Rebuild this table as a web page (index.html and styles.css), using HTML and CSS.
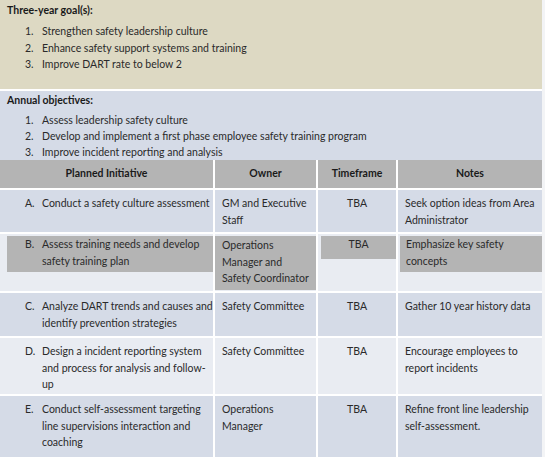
FILE: index.html
```html
<!DOCTYPE html>
<html lang="en">
<head>
    <meta charset="UTF-8">
    <meta name="viewport" content="width=device-width, initial-scale=1.0">
    <title>Safety Plan</title>
    <link rel="stylesheet" href="styles.css">
</head>
<body>
    <div class="page">
        <div class="goals">
            <h2>Three-year goal(s):</h2>
            <ol>
                <li><span class="num">1.</span><span>Strengthen safety leadership culture</span></li>
                <li><span class="num">2.</span><span>Enhance safety support systems and training</span></li>
                <li><span class="num">3.</span><span>Improve DART rate to below 2</span></li>
            </ol>
        </div>

        <div class="objectives">
            <h2>Annual objectives:</h2>
            <ol>
                <li><span class="num">1.</span><span>Assess leadership safety culture</span></li>
                <li><span class="num">2.</span><span>Develop and implement a first phase employee safety training program</span></li>
                <li><span class="num">3.</span><span>Improve incident reporting and analysis</span></li>
            </ol>
        </div>

        <div class="plan">
            <div class="row head">
                <div class="cell">Planned Initiative</div>
                <div class="cell">Owner</div>
                <div class="cell">Timeframe</div>
                <div class="cell">Notes</div>
            </div>

            <div class="row band row-a">
                <div class="cell"><div class="item"><span class="num">A.</span><span>Conduct a safety culture assessment</span></div></div>
                <div class="cell">GM and Executive Staff</div>
                <div class="cell center">TBA</div>
                <div class="cell">Seek option ideas from Area Administrator</div>
            </div>

            <div class="row light row-b">
                <div class="cell"><div class="shade shade-1"><div class="item"><span class="num">B.</span><span>Assess training needs and develop safety training plan</span></div></div></div>
                <div class="cell"><div class="shade shade-2">Operations Manager and<br>Safety Coordinator</div></div>
                <div class="cell"><div class="shade shade-3 center">TBA</div></div>
                <div class="cell"><div class="shade shade-4">Emphasize key safety concepts</div></div>
            </div>

            <div class="row band row-c">
                <div class="cell"><div class="item"><span class="num">C.</span><span>Analyze DART trends and causes and identify prevention strategies</span></div></div>
                <div class="cell">Safety Committee</div>
                <div class="cell center">TBA</div>
                <div class="cell">Gather 10 year history data</div>
            </div>

            <div class="row light row-d">
                <div class="cell"><div class="item"><span class="num">D.</span><span>Design a incident reporting system and process for analysis and follow-up</span></div></div>
                <div class="cell">Safety Committee</div>
                <div class="cell center">TBA</div>
                <div class="cell">Encourage employees to report incidents</div>
            </div>

            <div class="row band row-e">
                <div class="cell"><div class="item"><span class="num">E.</span><span>Conduct self-assessment targeting line supervisions interaction and coaching</span></div></div>
                <div class="cell">Operations Manager</div>
                <div class="cell center">TBA</div>
                <div class="cell">Refine front line leadership self-assessment.</div>
            </div>
        </div>
    </div>
</body>
</html>
```

FILE: styles.css
```css
body {
    margin: 0;
    background-color: #f3f4f6;
    font-family: Lato, "Open Sans", sans-serif;
    font-size: 10.5px;
    color: #2a2a2a;
}
.page {
    width: 542px;
    background-color: white;
}
h2 {
    margin: 0;
    font-size: 10.5px;
    font-weight: bold;
    line-height: 16px;
    color: #1a1a1a;
}
ol {
    list-style: none;
    margin: 0;
    padding: 0;
}
li {
    display: flex;
    line-height: 16.5px;
}
.item {
    display: flex;
}
.num {
    flex: none;
    width: 17px;
    padding-left: 18px;
}
.goals {
    background-color: #ddd9c3;
    height: 89px;
    padding: 2px 7px 0;
    box-sizing: border-box;
    margin-bottom: 2px;
}
.goals ol {
    margin-top: 5px;
}
.objectives {
    background-color: #d5dbe7;
    padding: 1px 7px 0;
    height: 69px;
    box-sizing: border-box;
}
.objectives ol {
    margin-top: 4px;
}
.objectives li {
    line-height: 16px;
}
.plan {
    display: flex;
    flex-direction: column;
    gap: 2px;
}
.row {
    display: grid;
    grid-template-columns: 213px 101px 78px 144px;
    gap: 2px;
}
.cell {
    padding: 5px 7px 0;
    line-height: 16.5px;
}
.row .cell:first-child {
    padding-right: 0;
}
.band .cell {
    background-color: #d5dbe7;
}
.light .cell {
    background-color: #e9ecf2;
}
.head .cell {
    background-color: #b4b4b4;
    font-weight: bold;
    text-align: center;
    color: #1a1a1a;
    padding: 5px 0 0;
    line-height: 16px;
    height: 28px;
    box-sizing: border-box;
}
.row-a { height: 42px; }
.row-b { height: 57px; }
.row-c { height: 43px; }
.row-d { height: 56px; }
.row-e { height: 70px; }
.center {
    text-align: center;
}
.row-b .cell {
    padding: 2px 0 0;
}
.shade {
    background-color: #b4b4b4;
    box-sizing: border-box;
}
.shade-1 {
    margin-left: 7px;
    height: 36px;
}
.shade-2 {
    padding: 1px 7px 0;
    height: 54px;
}
.shade-3 {
    margin-left: 3px;
    height: 23px;
}
.shade-4 {
    margin-left: 2px;
    padding-left: 6px;
    height: 36px;
}
```
